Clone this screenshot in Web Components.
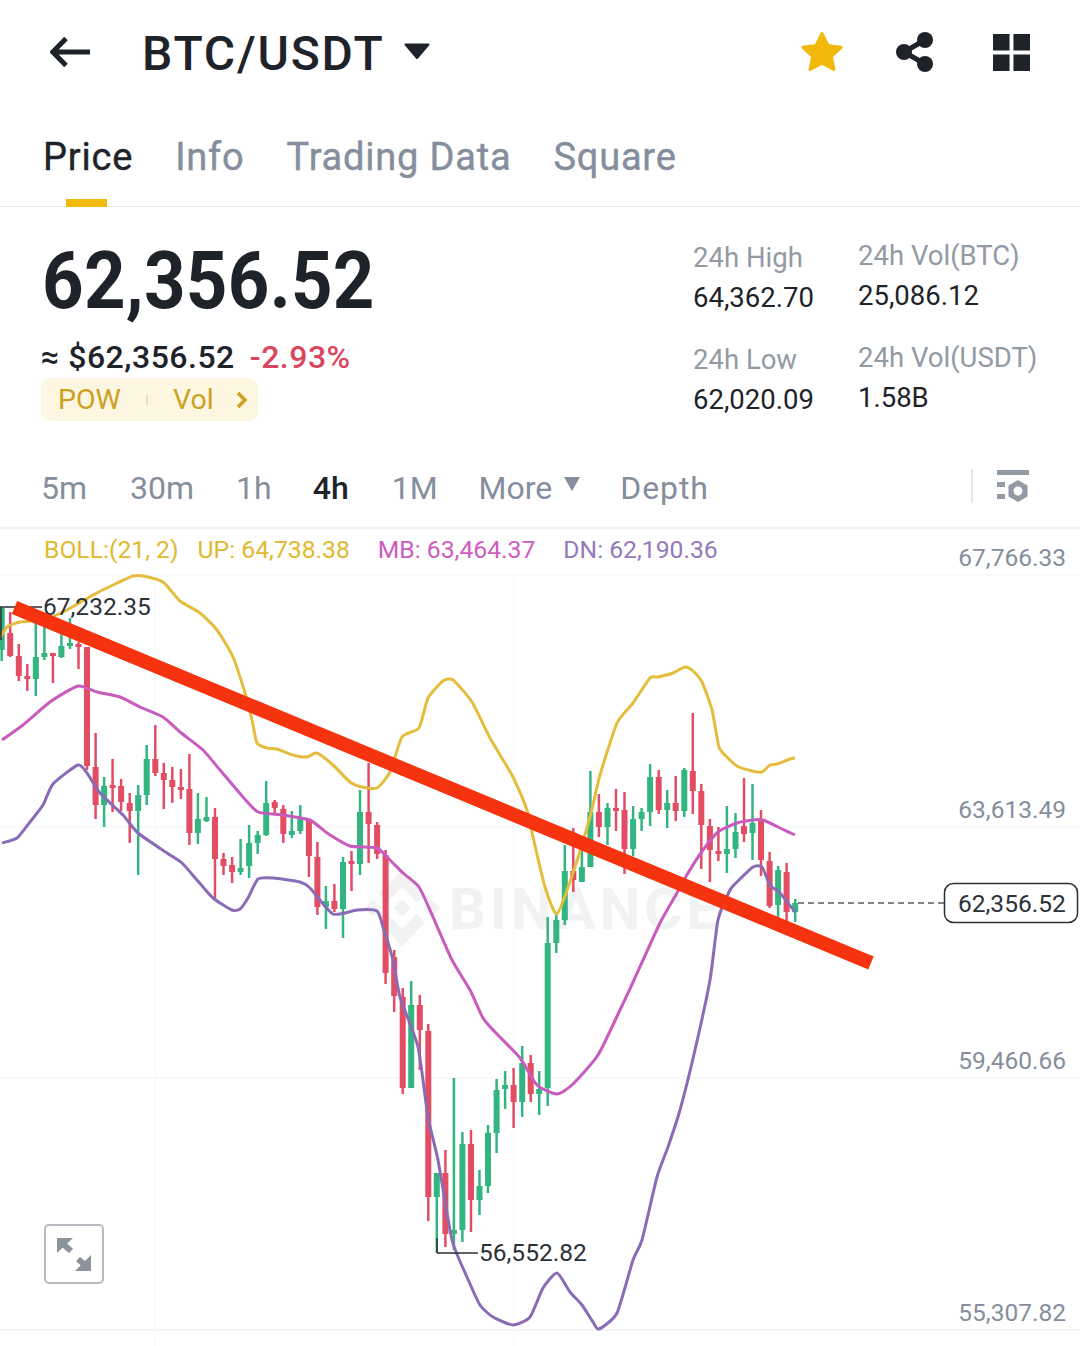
<!DOCTYPE html>
<html lang="en">
<head>
<meta charset="utf-8">
<title>BTC/USDT</title>
<style>
  html, body { margin: 0; background: #fff; }
  body { width: 1080px; font-family: Roboto, "Liberation Sans", sans-serif; color: #1e2329; }
</style>
</head>
<body>
<app-header pair="BTC/USDT"></app-header>
<tab-bar>
  <tab-item active>Price</tab-item>
  <tab-item>Info</tab-item>
  <tab-item>Trading Data</tab-item>
  <tab-item>Square</tab-item>
</tab-bar>
<price-panel last="62,356.52" fiat="$62,356.52" change="-2.93%">
  <stat-cell slot="stats" label="24h High" value="64,362.70"></stat-cell>
  <stat-cell slot="stats" label="24h Vol(BTC)" value="25,086.12" lift></stat-cell>
  <stat-cell slot="stats" label="24h Low" value="62,020.09"></stat-cell>
  <stat-cell slot="stats" label="24h Vol(USDT)" value="1.58B" lift></stat-cell>
</price-panel>
<interval-bar></interval-bar>
<kline-chart></kline-chart>

<script>
class AppHeader extends HTMLElement {
  connectedCallback() {
    const pair = this.getAttribute('pair') || '';
    this.attachShadow({ mode: 'open' }).innerHTML = `
      <style>
        :host { display: flex; align-items: center; height: 104px; padding: 0 50px 0 50px; box-sizing: border-box; }
        .title { margin-left: 52px; margin-top: 3px; font-size: 48px; font-weight: 500; letter-spacing: 1.800px; line-height: 1; }
        .caret { margin-left: 19px; margin-top: -2px; }
        .actions { margin-left: auto; display: flex; align-items: center; }
        svg { display: block; }
      </style>
      <svg width="40" height="30" viewBox="0 0 40 30"><path d="M40 15H3M16 1.500 2.800 15 16 28.500" fill="none" stroke="#1e2329" stroke-width="5"/></svg>
      <span class="title">${pair}</span>
      <svg class="caret" width="26" height="16" viewBox="0 0 26 16"><path d="M1.500 1.500h23L13 15z" fill="#1e2329" stroke="#1e2329" stroke-linejoin="round" stroke-width="2"/></svg>
      <div class="actions">
        <svg width="44" height="44" viewBox="0 0 44 44"><path d="M22 3.500l5.900 12 13.200 1.800-9.700 9.200 2.500 13L22 33.200l-11.900 6.300 2.500-13-9.700-9.200 13.200-1.800z" fill="#f0b90b" stroke="#f0b90b" stroke-width="3" stroke-linejoin="round"/></svg>
        <svg style="margin-left:51px" width="40" height="44" viewBox="0 0 40 44"><path d="M30 10 9 22l21 12" fill="none" stroke="#1e2329" stroke-width="5"/><circle cx="30" cy="10" r="8" fill="#1e2329"/><circle cx="9" cy="22" r="8" fill="#1e2329"/><circle cx="30" cy="34" r="8" fill="#1e2329"/></svg>
        <svg style="margin-left:58px" width="37" height="37" viewBox="0 0 38 38"><path d="M0 0h17v17H0zM21 0h17v17H21zM0 21h17v17H0zM21 21h17v17H21z" fill="#1e2329"/></svg>
      </div>`;
  }
}

class TabItem extends HTMLElement {
  constructor() {
    super();
    this.attachShadow({ mode: 'open' }).innerHTML = `
      <style>
        :host { display: block; position: relative; font-size: 38px; letter-spacing: .8px; line-height: 44px; color: #848e9c; padding-top: 31px; height: 72px; -webkit-text-stroke: .4px currentColor; }
        :host([active]) { color: #1e2329; }
        :host([active])::after { content: ""; position: absolute; left: 50%; bottom: 0; width: 41px; height: 8px; margin-left: -22px; background: #f0b90b; }
      </style>
      <slot></slot>`;
  }
}

class TabBar extends HTMLElement {
  constructor() {
    super();
    this.attachShadow({ mode: 'open' }).innerHTML = `
      <style>
        :host { display: flex; gap: 42px; height: 103px; padding: 0 0 0 43px; box-sizing: border-box; border-bottom: 1px solid #eaecef; }
      </style>
      <slot></slot>`;
  }
}

class StatCell extends HTMLElement {
  connectedCallback() {
    this.attachShadow({ mode: 'open' }).innerHTML = `
      <style>
        :host { display: block; height: 102px; }
        :host([lift]) { margin-top: -2px; }
        .l { font-size: 27.500px; line-height: 36px; color: #929aa5; }
        .v { font-size: 27.500px; line-height: 36px; margin-top: 4px; color: #1e2329; }
      </style>
      <div class="l">${this.getAttribute('label')}</div>
      <div class="v">${this.getAttribute('value')}</div>`;
  }
}

class PricePanel extends HTMLElement {
  connectedCallback() {
    const a = n => this.getAttribute(n);
    this.attachShadow({ mode: 'open' }).innerHTML = `
      <style>
        :host { display: flex; justify-content: space-between; height: 235px; padding: 32px 0 0 41px; box-sizing: border-box; }
        .last { font-size: 74px; font-weight: 700; line-height: 84px; letter-spacing: .3px; margin-left: 1px; transform: scale(.98, 1.08); transform-origin: 0 50%; }
        .sub { display: flex; margin-top: 16px; font-size: 32px; line-height: 36px; font-weight: 500; letter-spacing: .5px; }
        .chg { margin-left: 15px; color: #d9475f; }
        .pill { display: inline-flex; align-items: center; height: 43px; margin-top: 3px; padding: 0 10px 0 17px; border-radius: 10px; background: #fdf6e1; color: #cda123; font-size: 28.500px; }
        .sep { width: 2px; height: 10px; margin: 0 25px; background: #eadfb8; }
        .pill svg { margin-left: 22px; }
        .stats { display: grid; grid-template-columns: 165px 222px; grid-auto-rows: 102px; padding-top: 1px; }
      </style>
      <div>
        <div class="last">${a('last')}</div>
        <div class="sub"><span>≈ ${a('fiat')}</span><span class="chg">${a('change')}</span></div>
        <div class="pill"><span>POW</span><i class="sep"></i><span>Vol</span><svg width="12" height="18" viewBox="0 0 12 18"><path d="M2 2l7 7-7 7" fill="none" stroke="#cda123" stroke-width="3.500"/></svg></div>
      </div>
      <div class="stats"><slot name="stats"></slot></div>`;
  }
}

class IntervalBar extends HTMLElement {
  connectedCallback() {
    const items = [['5m', 43], ['30m', 42], ['1h', 41], ['4h', 43, 1], ['1M', 41], ['More', 44]];
    const cells = items.map(([t, gap, on]) => `<span class="${on ? 'on' : ''}" style="margin-right:${gap}px">${t}</span>`).join('');
    this.attachShadow({ mode: 'open' }).innerHTML = `
      <style>
        :host { display: flex; align-items: center; height: 87px; padding: 7px 50px 0 41px; box-sizing: border-box; border-bottom: 2px solid #eef0f2; font-size: 32px; color: #848e9c; }
        .on { color: #1e2329; font-weight: 500; }
        .caret { margin: -8px 40px 0 -32px; }
        .depth { letter-spacing: .9px; }
        .tools { margin: -4px 0 0 auto; display: flex; align-items: center; }
        .bar { width: 2px; height: 34px; background: #e6e8ea; margin-right: 23px; }
        svg { display: block; }
      </style>
      ${cells}
      <svg class="caret" width="16" height="14" viewBox="0 0 16 14"><path d="M0 0h16L8 14z" fill="#848e9c"/></svg>
      <span class="depth">Depth</span>
      <div class="tools">
        <i class="bar"></i>
        <svg width="34" height="34" viewBox="0 0 34 34"><path d="M1 1h32v5H1zM1 13h8v5H1zM1 25h8v5H1z" fill="#929aa5"/><path fill-rule="evenodd" d="M22 11l9.500 5.500v11L22 33l-9.500-5.500v-11zM22 17.500a4.500 4.500 0 1 0 0 9 4.500 4.500 0 0 0 0-9z" fill="#929aa5"/></svg>
      </div>`;
  }
}

// [green?, wickTop, bodyTop, bodyBottom, wickBottom] in page y
const CANDLES = [
  [1,608,608,650,661],[0,612,633,656,657],[0,644,656,676,681],[0,664,676,679,691],[1,620,657,679,696],
  [1,627,653,657,660],[0,653,653,656,683],[1,633,646,657,658],[1,618,643,646,649],[0,642,644,647,669],
  [0,647,647,766,770],[0,733,767,805,819],[1,777,786,805,827],[0,759,785,787,812],[0,779,786,802,811],
  [0,793,803,811,843],[1,785,795,811,875],[1,745,759,795,805],[0,725,759,773,776],[0,763,773,780,809],
  [0,767,780,787,803],[0,769,787,789,799],[0,754,789,833,845],[1,793,819,833,844],[1,797,817,821,822],
  [0,808,817,859,900],[0,853,859,866,875],[0,857,865,872,883],[1,839,868,872,875],[1,825,843,866,878],
  [1,831,835,843,854],[1,781,803,835,836],[0,800,802,808,813],[0,805,809,834,843],[1,811,831,835,838],
  [1,805,819,831,834],[0,819,820,856,877],[0,842,857,907,915],[1,886,901,907,929],[0,884,901,909,912],
  [1,857,862,909,938],[0,851,861,864,891],[1,790,812,864,875],[0,763,812,824,863],[0,822,825,854,859],
  [0,850,855,973,984],[0,950,957,996,1012],[0,988,997,1088,1094],[1,981,1005,1088,1088],[0,995,1005,1030,1070],
  [0,1024,1031,1197,1221],[1,1173,1173,1197,1253],[0,1150,1173,1234,1247],[1,1078,1230,1234,1250],[1,1132,1144,1230,1242],
  [0,1130,1144,1200,1232],[1,1170,1186,1200,1215],[1,1125,1133,1186,1193],[1,1079,1090,1133,1153],[1,1071,1085,1089,1109],
  [0,1068,1085,1102,1128],[1,1046,1063,1102,1117],[0,1055,1063,1094,1102],[1,1071,1089,1094,1115],[1,917,943,1088,1106],
  [1,914,920,943,953],[1,845,871,920,925],[0,828,871,880,892],[1,848,867,882,882],[1,771,812,867,867],
  [0,794,812,827,837],[1,803,808,827,845],[0,789,808,811,831],[0,792,810,849,874],[1,806,819,849,856],
  [1,808,812,819,831],[1,764,777,812,826],[0,770,777,810,814],[1,790,803,810,828],[0,776,803,811,821],
  [1,768,770,811,817],[0,713,771,791,814],[0,784,791,825,869],[0,819,826,850,882],[0,827,851,853,861],
  [1,806,849,854,873],[1,813,832,849,858],[0,778,826,834,842],[1,784,823,833,860],[0,810,820,860,876],
  [0,852,861,906,908],[1,866,870,905,918],[0,863,872,912,922],[1,899,903,912,922]
];

const BOLL_UP = '0,638 7,627 20,622 43,620 67,610 93,595 113,585 133,576 143,576 163,582 180,601 200,613 217,630 233,657 245,693 252,720 257,743 267,748 277,749 293,755 307,757 317,753 333,765 350,782 362,787 377,788 390,772 402,737 419,728 428,698 443,681 453,680 472,702 490,738 513,777 527,810 533,837 545,887 557,914 573,873 590,817 600,775 617,723 633,703 650,678 658,677 673,673 685,667 693,671 702,682 712,710 719,747 727,757 737,766 752,771 762,772 770,765 777,764 790,759 795,758';
const BOLL_MB = '2,740 23,725 50,702 78,686 97,692 120,697 140,707 163,717 180,732 203,750 220,770 243,797 258,812 283,815 310,820 327,833 350,846 377,848 390,860 403,873 419,887 433,917 452,960 470,990 483,1018 495,1032 520,1058 537,1085 557,1094 573,1084 598,1055 620,1010 634,980 660,923 677,893 688,873 703,850 718,832 737,823 753,820 763,820 780,828 795,835';
const BOLL_DN = '2,843 17,838 30,822 43,805 53,784 78,765 87,773 100,793 123,815 138,833 167,853 182,863 197,880 213,898 232,910 240,909 248,898 258,879 273,878 300,882 310,888 333,914 357,910 377,911 383,927 393,960 400,997 418,1047 428,1117 438,1160 452,1240 467,1277 480,1305 493,1317 513,1325 530,1317 543,1288 557,1273 570,1292 582,1305 593,1322 599,1329 617,1313 633,1260 642,1240 657,1177 668,1147 680,1110 695,1050 710,980 718,920 730,890 737,882 753,867 762,867 770,885 780,893 795,912';

// light catmull-rom so the bands don't look like straight segments
function smooth(str) {
  const p = str.split(' ').map(s => s.split(',').map(Number));
  let d = `M${p[0]}`;
  for (let i = 0; i < p.length - 1; i++) {
    const a = p[i - 1] || p[i], b = p[i], c = p[i + 1], e = p[i + 2] || c;
    const k = 0.1;
    d += `C${(b[0] + (c[0] - a[0]) * k).toFixed(1)} ${(b[1] + (c[1] - a[1]) * k).toFixed(1)} ${(c[0] - (e[0] - b[0]) * k).toFixed(1)} ${(c[1] - (e[1] - b[1]) * k).toFixed(1)} ${c[0]} ${c[1]}`;
  }
  return d;
}

class KlineChart extends HTMLElement {
  connectedCallback() {
    const candles = CANDLES.map((c, i) => {
      const x = (1.7 + 8.532 * i).toFixed(1);
      const col = c[0] ? '#33b582' : '#e24d63';
      const h = Math.max(c[3] - c[2], 3);
      return `<path d="M${x} ${c[1]}V${c[4]}" stroke="${col}" stroke-width="2.500"/><rect x="${x - 3}" y="${c[2]}" width="6" height="${h}" fill="${col}"/>`;
    }).join('');
    const axis = [[558, '67,766.33'], [810, '63,613.49'], [1061, '59,460.66'], [1313, '55,307.82']]
      .map(([y, t]) => `<text class="axis" x="1066" y="${y + 8}" text-anchor="end">${t}</text>`).join('');
    const grid = [575, 827, 1078, 1330].map(y => `<path d="M0 ${y}H1080" stroke="#f2f3f5" stroke-width="${y === 1330 ? 2 : 1}"/>`).join('')
      + [155, 514].map(x => `<path d="M${x} 575V1346" stroke="#f6f7f8"/>`).join('');

    this.attachShadow({ mode: 'open' }).innerHTML = `
      <style>
        :host { display: block; position: relative; height: 817px; overflow: hidden; }
        svg { display: block; }
        .legend { position: absolute; left: 44px; top: 7px; display: flex; font-size: 24.700px; line-height: 28px; }
        .legend span { white-space: nowrap; }
        text { font-family: Roboto, "Liberation Sans", sans-serif; font-size: 24.500px; fill: #2b3139; }
        text.axis { fill: #848e9c; }
        text.mark { font-size: 58px; font-weight: 700; fill: #f1f2f3; letter-spacing: 4px; }
        path.band { fill: none; stroke-width: 3; stroke-linejoin: round; }
        .zoom { position: absolute; left: 44px; top: 695px; width: 60px; height: 60px; box-sizing: border-box; border: 2px solid #b7bbc1; border-radius: 5px; background: #fff; }
      </style>
      <svg width="1080" height="817" viewBox="0 529 1080 817">
        ${grid}
        <g fill="#f1f2f3" transform="translate(364 870) scale(.6)"><path d="M38.730 53.200l24.590-24.580 24.600 24.600 14.300-14.310L63.320 0 24.430 38.900zM0 63.310l14.300-14.310 14.310 14.310-14.310 14.300zM38.730 73.410l24.590 24.590 24.600-24.600 14.310 14.290-38.900 38.910-38.910-38.880zM98 63.310l14.300-14.310 14.310 14.300-14.310 14.320zM77.830 63.300L63.320 48.780 52.590 59.510l-1.240 1.230-2.540 2.540 14.510 14.500 14.510-14.470z"/></g>
        <text class="mark" x="449" y="929">BINANCE</text>
        ${candles}
        <path class="band" d="${smooth(BOLL_UP)}" stroke="#e5bd3c"/>
        <path class="band" d="${smooth(BOLL_MB)}" stroke="#c95bbd"/>
        <path class="band" d="${smooth(BOLL_DN)}" stroke="#8a6bb5"/>
        ${axis}
        <path d="M0 607H42M1 607V640" stroke="#2b3139" stroke-width="1.500" fill="none"/>
        <text x="43" y="615">67,232.35</text>
        <path d="M437 1253H478M437 1253V1238" stroke="#2b3139" stroke-width="1.500" fill="none"/>
        <text x="479" y="1261">56,552.82</text>
        <path d="M798 903H944" stroke="#555b63" stroke-width="1.500" stroke-dasharray="6 4"/>
        <rect x="944.500" y="883.500" width="133" height="39" rx="9" fill="#fff" stroke="#2b3139" stroke-width="1.500"/>
        <text x="958" y="912">62,356.52</text>
        <path d="M14.500 607.500 871 963" stroke="#f5330f" stroke-width="14"/>
      </svg>
      <div class="legend">
        <span style="color:#e0b92f">BOLL:(21, 2)</span>
        <span style="color:#e0b92f;margin-left:19px">UP: 64,738.38</span>
        <span style="color:#cf5cc0;margin-left:28px">MB: 63,464.37</span>
        <span style="color:#9678bd;margin-left:28px">DN: 62,190.36</span>
      </div>
      <div class="zoom">
        <svg width="56" height="56" viewBox="0 0 56 56"><path d="M11 12h16L11 27zM45 29v16H29z" fill="#8c939c"/><path d="M16 17l9 8M32 33l8 7" stroke="#8c939c" stroke-width="6"/></svg>
      </div>`;
  }
}

customElements.define('app-header', AppHeader);
customElements.define('tab-item', TabItem);
customElements.define('tab-bar', TabBar);
customElements.define('stat-cell', StatCell);
customElements.define('price-panel', PricePanel);
customElements.define('interval-bar', IntervalBar);
customElements.define('kline-chart', KlineChart);
</script>
</body>
</html>
